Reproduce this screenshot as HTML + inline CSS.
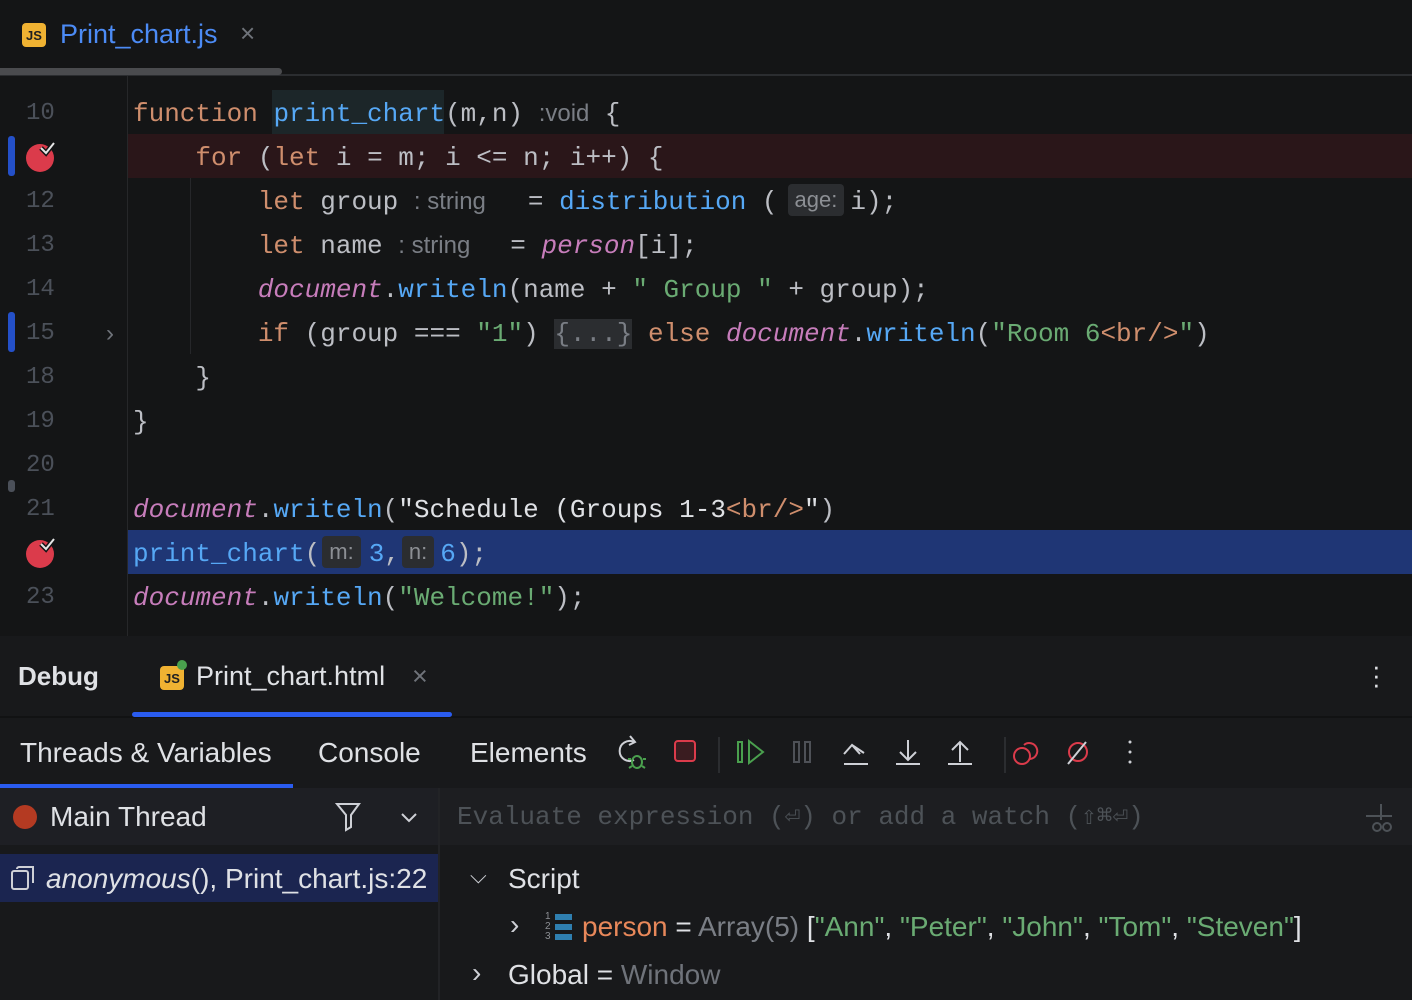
<!DOCTYPE html>
<html><head><meta charset="utf-8"><style>
*{margin:0;padding:0;box-sizing:border-box}
body{width:1412px;height:1000px;background:#141516;overflow:hidden;position:relative;font-family:"Liberation Sans",sans-serif;color:#dfe1e5}
.abs{position:absolute}
.code{position:absolute;left:133px;height:44px;line-height:48px;font-family:"Liberation Mono",monospace;font-size:26px;color:#bcbec4;white-space:pre}
.ln{position:absolute;left:26px;width:40px;height:44px;line-height:48px;font-family:"Liberation Mono",monospace;font-size:24px;color:#4b5059}
.k{color:#cf8e6d}.f{color:#56a8f5}.p{color:#c77dbb;font-style:italic}.s{color:#6aab73}
.h{display:inline-block;font-family:"Liberation Sans",sans-serif;font-size:24px;color:#7a7e85}
.hb{display:inline-block;font-family:"Liberation Sans",sans-serif;font-size:22px;color:#8c8f94;background:#2b2d30;border-radius:4px;line-height:32px;padding:0 7px;vertical-align:2px}
.t{font-size:27px;color:#dfe1e5;position:absolute}
</style></head><body>
<div class="abs" style="left:0;top:0;width:1412px;height:74px;background:#141516"></div>
<div class="abs" style="left:22px;top:23px;width:24px;height:24px;background:#f0b232;border-radius:4px;color:#1e1f22;font:bold 13px 'Liberation Sans';text-align:center;line-height:26px">JS</div>
<div class="t" style="left:60px;top:19px;color:#4c8bf5;font-size:27px">Print_chart.js</div>
<div class="t" style="left:240px;top:18px;color:#6f737a;font-size:26px">×</div>
<div class="abs" style="left:0;top:74px;width:1412px;height:2px;background:#2b2d30"></div>
<div class="abs" style="left:0;top:68px;width:282px;height:7px;background:#4a4b4e;border-radius:0 4px 4px 0"></div>
<div class="abs" style="left:127px;top:76px;width:1px;height:560px;background:#262729"></div>
<div class="abs" style="left:190px;top:178px;width:1px;height:176px;background:#26272a"></div>
<div class="abs" style="left:128px;top:134px;width:1284px;height:44px;background:#2a1619"></div>
<div class="abs" style="left:128px;top:530px;width:1284px;height:44px;background:#1f3675"></div>
<div class="abs" style="left:272px;top:90px;width:172px;height:44px;background:#1c2629"></div>
<div class="abs" style="left:8px;top:136px;width:7px;height:40px;background:#2450c8;border-radius:3px"></div>
<div class="abs" style="left:8px;top:312px;width:7px;height:40px;background:#2450c8;border-radius:3px"></div>
<div class="abs" style="left:8px;top:480px;width:7px;height:12px;background:#4b5059;border-radius:3px"></div>
<svg class="abs" style="left:24px;top:140px" width="34" height="34"><circle cx="16" cy="18" r="14" fill="#db3b4b"/><path d="M17 8l5 5 8-10" stroke="#141516" stroke-width="5" fill="none"/><path d="M17 8l5 5 8-10" stroke="#e6e6e6" stroke-width="2" fill="none"/></svg>
<svg class="abs" style="left:24px;top:536px" width="34" height="34"><circle cx="16" cy="18" r="14" fill="#db3b4b"/><path d="M17 8l5 5 8-10" stroke="#141516" stroke-width="5" fill="none"/><path d="M17 8l5 5 8-10" stroke="#e6e6e6" stroke-width="2" fill="none"/></svg>
<div class="ln" style="top:90px">10</div>
<div class="ln" style="top:178px">12</div>
<div class="ln" style="top:222px">13</div>
<div class="ln" style="top:266px">14</div>
<div class="ln" style="top:310px">15</div>
<div class="ln" style="top:354px">18</div>
<div class="ln" style="top:398px">19</div>
<div class="ln" style="top:442px">20</div>
<div class="ln" style="top:486px">21</div>
<div class="ln" style="top:574px">23</div>
<div class="abs" style="left:106px;top:320px;color:#6f737a;font-size:24px">›</div>
<div class="code" style="top:90px"><span class="k">function</span> <span class="f">print_chart</span>(m,n) <span class="h" style="width:66px">:void</span>{</div>
<div class="code" style="top:134px">    <span class="k">for</span> (<span class="k">let</span> i = m; i &lt;= n; i++) {</div>
<div class="code" style="top:178px">        <span class="k">let</span> group <span class="h" style="width:114px">: string</span>= <span class="f">distribution</span> (<span class="hb" style="margin:0 6px 0 10px">age:</span>i);</div>
<div class="code" style="top:222px">        <span class="k">let</span> name <span class="h" style="width:112px">: string</span>= <span class="p">person</span>[i];</div>
<div class="code" style="top:266px">        <span class="p">document</span>.<span class="f">writeln</span>(name + <span class="s">" Group "</span> + group);</div>
<div class="code" style="top:310px">        <span class="k">if</span> (group === <span class="s">"1"</span>) <span style="background:#2b2d30;color:#7a7e85">{...}</span> <span class="k">else</span> <span class="p">document</span>.<span class="f">writeln</span>(<span class="s">"Room 6</span><span class="k">&lt;br/&gt;</span><span class="s">"</span>)</div>
<div class="code" style="top:354px">    }</div>
<div class="code" style="top:398px">}</div>
<div class="code" style="top:486px"><span class="p">document</span>.<span class="f">writeln</span>(<span style="color:#dfe1e5">"Schedule (Groups 1-3</span><span class="k">&lt;br/&gt;</span><span style="color:#dfe1e5">"</span>)</div>
<div class="code" style="top:530px"><span class="f">print_chart</span>(<span class="hb" style="margin:0 8px 0 2px">m:</span><span class="f">3</span>,<span class="hb" style="margin:0 6px 0 2px">n:</span><span class="f">6</span>);</div>
<div class="code" style="top:574px"><span class="p">document</span>.<span class="f">writeln</span>(<span class="s">"Welcome!"</span>);</div>
<div class="abs" style="left:0;top:636px;width:1412px;height:364px;background:#18191b"></div>
<div class="abs" style="left:0;top:716px;width:1412px;height:2px;background:#111213"></div>
<div class="t" style="left:18px;top:661px;font-weight:bold;font-size:26px">Debug</div>
<div class="abs" style="left:160px;top:666px;width:24px;height:24px;background:#f0b232;border-radius:4px;color:#1e1f22;font:bold 13px 'Liberation Sans';text-align:center;line-height:26px">JS</div>
<div class="abs" style="left:177px;top:660px;width:10px;height:10px;background:#4aa04e;border-radius:50%"></div>
<div class="t" style="left:196px;top:661px">Print_chart.html</div>
<div class="t" style="left:412px;top:661px;color:#6f737a">×</div>
<div class="abs" style="left:132px;top:712px;width:320px;height:5px;background:#2a5cf0;border-radius:3px"></div>
<div class="abs" style="left:1372px;top:662px;color:#dfe1e5;font-size:26px;line-height:9px;width:4px">·<br>·<br>·</div>
<div class="t" style="left:20px;top:737px;font-size:28px">Threads &amp; Variables</div>
<div class="t" style="left:318px;top:737px;font-size:28px">Console</div>
<div class="t" style="left:470px;top:737px;font-size:28px">Elements</div>
<div class="abs" style="left:0;top:784px;width:293px;height:4px;background:#2a5cf0"></div>
<svg class="abs" style="left:612px;top:732px" width="540" height="42" fill="none" stroke-width="2">
<path d="M22 10a10 10 0 1 0 0 18" stroke="#ced0d6"/><path d="M18 4l5 6-6 3" stroke="#ced0d6"/><ellipse cx="25" cy="30" rx="5" ry="6" stroke="#4aa04e"/><path d="M19 27h-3M34 27h-3M20 34l-3 2M30 34l3 2" stroke="#4aa04e"/>
<rect x="63" y="9" width="20" height="20" rx="3" fill="#3a1c20" stroke="#db3b4b"/>
<path d="M107 5v36M393 5v36" stroke="#2b2d30"/>
<rect x="126" y="10" width="4" height="20" stroke="#4aa04e"/><path d="M137 9v22l14-11z" stroke="#4aa04e"/>
<rect x="182" y="10" width="5" height="20" stroke="#4e5157"/><rect x="193" y="10" width="5" height="20" stroke="#4e5157"/>
<path d="M232 22l8-9 8 9M240 13l12 8M232 32h24" stroke="#ced0d6"/>
<path d="M296 8v20M288 20l8 8 8-8M284 32h24" stroke="#ced0d6"/>
<path d="M348 10v20M340 18l8-8 8 8M336 32h24" stroke="#ced0d6"/>
<circle cx="410" cy="24" r="8" stroke="#db3b4b"/><path d="M412 13a8 8 0 1 1 6 14" stroke="#db3b4b"/>
<circle cx="466" cy="20" r="9" stroke="#db3b4b"/><path d="M456 32l18-22" stroke="#ced0d6"/>
<circle cx="518" cy="10" r="1.5" fill="#ced0d6" stroke="none"/><circle cx="518" cy="20" r="1.5" fill="#ced0d6" stroke="none"/><circle cx="518" cy="30" r="1.5" fill="#ced0d6" stroke="none"/>
</svg>
<div class="abs" style="left:0;top:788px;width:438px;height:57px;background:#1e1f24"></div>
<div class="abs" style="left:440px;top:788px;width:972px;height:57px;background:#1d1e21"></div>
<div class="abs" style="left:438px;top:788px;width:2px;height:212px;background:#222326"></div>
<div class="abs" style="left:13px;top:805px;width:24px;height:24px;border-radius:50%;background:#b43a22"></div>
<div class="t" style="left:50px;top:801px;font-size:28px">Main Thread</div>
<svg class="abs" style="left:335px;top:802px" width="90" height="30" fill="none" stroke="#ced0d6" stroke-width="2"><path d="M2 2h22l-8 11v12l-5 3v-15z"/><path d="M67 12l7 7 7-7"/></svg>
<div class="abs" style="left:457px;top:801px;font:26px 'Liberation Mono',monospace;color:#4d5257;white-space:pre">Evaluate expression (⏎) or add a watch (⇧⌘⏎)</div>
<svg class="abs" style="left:1362px;top:802px" width="30" height="32" fill="none" stroke="#4d5257" stroke-width="2"><path d="M19 2v16M4 14h30"/><circle cx="15" cy="25" r="4"/><circle cx="25" cy="25" r="4"/></svg>
<div class="abs" style="left:0;top:854px;width:438px;height:48px;background:#1b2550"></div>
<svg class="abs" style="left:10px;top:865px" width="28" height="28" fill="none" stroke="#ced0d6" stroke-width="2"><rect x="2" y="6" width="16" height="18" rx="2"/><path d="M7 4a2 2 0 0 1 2-2h14v16"/></svg>
<div class="t" style="left:46px;top:863px;font-size:28px"><i>anonymous</i>(), Print_chart.js:22</div>
<div class="abs" style="left:470px;top:863px;color:#ced0d6;font-size:22px">⌵</div>
<div class="t" style="left:508px;top:863px;font-size:28px">Script</div>
<div class="abs" style="left:510px;top:911px;color:#ced0d6;font-size:28px;line-height:28px">›</div>
<div class="abs" style="left:545px;top:912px;font-size:10px;line-height:10px;color:#8c8f94">1<br>2<br>3</div>
<div class="abs" style="left:555px;top:914px;width:17px;height:6px;background:#2f7fb0;box-shadow:0 10px 0 #2f7fb0,0 20px 0 #2f7fb0"></div>
<div class="t" style="left:582px;top:911px;font-size:28px"><span style="color:#e8885a">person</span> = <span style="color:#7a7e85">Array(5)</span> [<span class="s">"Ann"</span>, <span class="s">"Peter"</span>, <span class="s">"John"</span>, <span class="s">"Tom"</span>, <span class="s">"Steven"</span>]</div>
<div class="abs" style="left:472px;top:959px;color:#ced0d6;font-size:28px;line-height:28px">›</div>
<div class="t" style="left:508px;top:959px;font-size:28px">Global = <span style="color:#6f737a">Window</span></div>
</body></html>
